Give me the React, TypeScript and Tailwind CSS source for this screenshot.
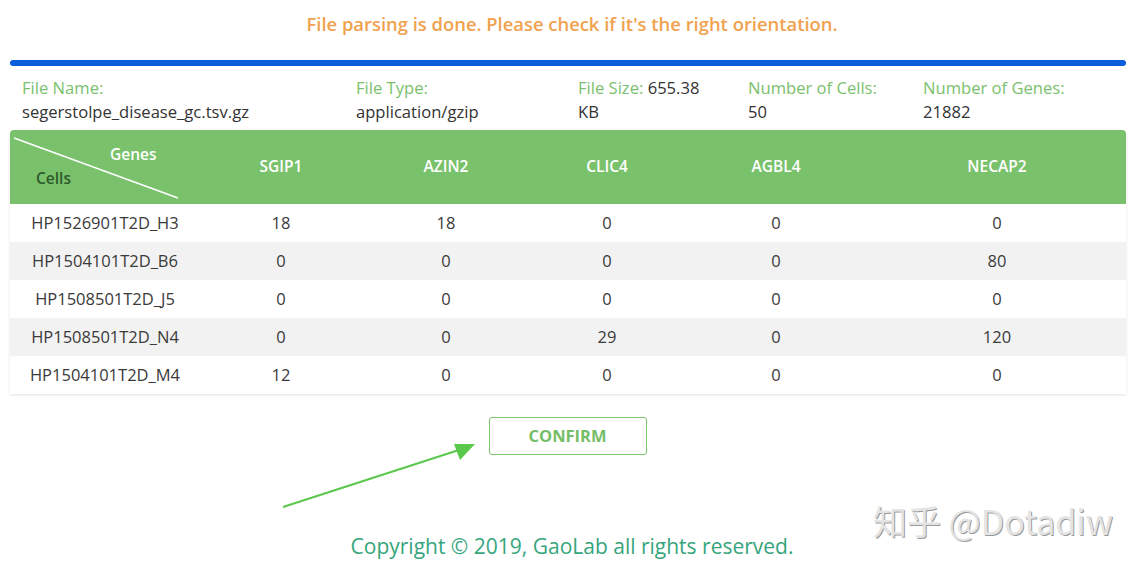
const genes = ["SGIP1", "AZIN2", "CLIC4", "AGBL4", "NECAP2"];

const rows: { cell: string; values: number[] }[] = [
  { cell: "HP1526901T2D_H3", values: [18, 18, 0, 0, 0] },
  { cell: "HP1504101T2D_B6", values: [0, 0, 0, 0, 80] },
  { cell: "HP1508501T2D_J5", values: [0, 0, 0, 0, 0] },
  { cell: "HP1508501T2D_N4", values: [0, 0, 29, 0, 120] },
  { cell: "HP1504101T2D_M4", values: [12, 0, 0, 0, 0] },
];

const info = [
  { label: "File Name:", value: "segerstolpe_disease_gc.tsv.gz", w: "w-[334px]" },
  { label: "File Type:", value: "application/gzip", w: "w-[222px]" },
  { label: "File Size:", inline: "655.38", value: "KB", w: "w-[170px]" },
  { label: "Number of Cells:", value: "50", w: "w-[175px]" },
  { label: "Number of Genes:", value: "21882", w: "w-[200px]" },
];

const colW = ["w-[190px]", "w-[162px]", "w-[168px]", "w-[154px]", "w-[184px]", ""];

export default function App() {
  return (
    <div
      className="relative w-[1144px] h-[569px] bg-white overflow-hidden"
      style={{ fontFamily: '"Open Sans", "Noto Sans", sans-serif' }}
    >
      {/* Status message */}
      <p className="pt-[11px] text-center text-[18.4px] font-semibold text-[#f0a24f] leading-[26px]">
        File parsing is done. Please check if it's the right orientation.
      </p>

      <div className="px-[10px] pt-[23px]">
        {/* Progress bar */}
        <div className="h-[6px] w-[1116px] rounded-full bg-[#0a5ddb]" />

        {/* File info */}
        <div className="flex pl-[12px] pt-[10px] text-[16.6px] leading-[24px]">
          {info.map((f) => (
            <div key={f.label} className={f.w}>
              <div className="text-[#7bbf6e]">
                {f.label}
                {f.inline && <span className="text-[#333]"> {f.inline}</span>}
              </div>
              <div className="text-[#333]">{f.value}</div>
            </div>
          ))}
        </div>

        {/* Table */}
        <div className="mt-[6px] w-[1116px] rounded-t-[4px] overflow-hidden shadow-[0_1px_3px_rgba(0,0,0,0.12)]">
          <table className="w-full border-collapse table-fixed">
            <thead>
              <tr className="bg-[#79c26b] h-[74px]">
                <th className={`${colW[0]} relative p-0`}>
                  <svg className="absolute inset-0" width="190" height="74">
                    <line x1="4" y1="8" x2="168" y2="68" stroke="white" strokeWidth="1.5" />
                  </svg>
                  <span className="absolute left-[100px] top-[13px] text-[15.5px] font-semibold text-white">Genes</span>
                  <span className="absolute left-[26px] top-[37px] text-[15.5px] font-semibold text-[#2e5a2b]">Cells</span>
                </th>
                {genes.map((g, i) => (
                  <th key={g} className={`${colW[i + 1]} text-[15.5px] font-semibold text-white text-center`}>
                    {g}
                  </th>
                ))}
              </tr>
            </thead>
            <tbody>
              {rows.map((r, ri) => (
                <tr key={r.cell} className={`h-[38px] ${ri % 2 === 1 ? "bg-[#f2f2f2]" : "bg-white"}`}>
                  <td className="text-center text-[16.5px] font-medium text-[#3a3a3a]">{r.cell}</td>
                  {r.values.map((v, i) => (
                    <td key={i} className="text-center text-[16.5px] font-medium text-[#3a3a3a]">
                      {v}
                    </td>
                  ))}
                </tr>
              ))}
            </tbody>
          </table>
        </div>

        {/* Confirm */}
        <div className="flex justify-center pt-[23px] pr-[9px]">
          <button className="w-[158px] h-[38px] rounded-[3px] border border-[#7cc46e] text-[16.5px] font-bold text-[#76bd68] bg-white">
            CONFIRM
          </button>
        </div>
      </div>

      {/* Copyright */}
      <p className="absolute left-0 right-0 top-[531px] text-center text-[21px] text-[#36a57c] leading-[30px]">
        Copyright © 2019, GaoLab all rights reserved.
      </p>

      {/* Annotation arrow */}
      <svg className="absolute left-0 top-0 pointer-events-none" width="1144" height="569">
        <line x1="283" y1="507" x2="462" y2="449" stroke="#5ac84a" strokeWidth="2" />
        <polygon points="475,444 454,444 460,460" fill="#5ac84a" />
      </svg>

      {/* Watermark */}
      <div
        className="absolute left-[873px] top-[499px] text-[34px] text-[#e4e4e4] leading-[44px] whitespace-nowrap"
        style={{
          fontFamily: '"Noto Sans CJK SC", "Noto Sans", sans-serif',
          textShadow: "1px 1px 0 #9a9a9a",
        }}
      >
        知乎 @Dotadiw
      </div>
    </div>
  );
}
